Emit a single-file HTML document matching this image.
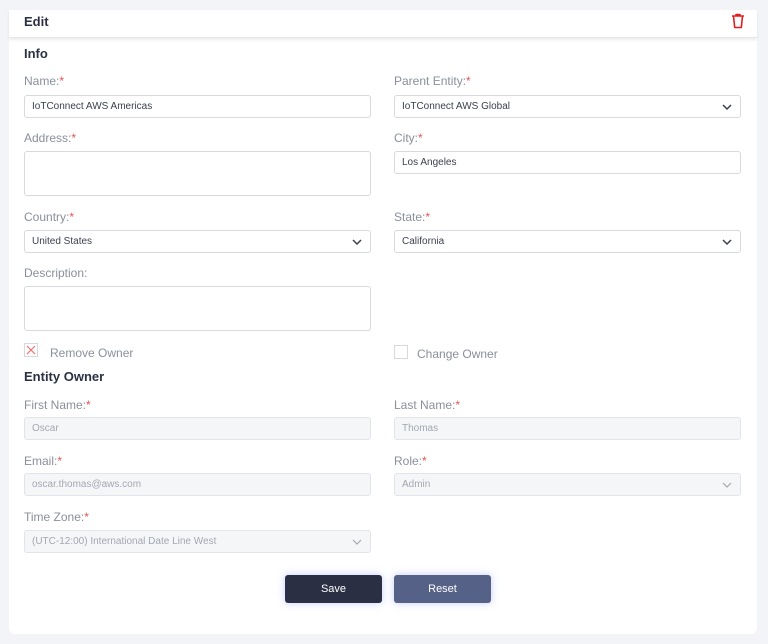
<!DOCTYPE html><html><head><style>
*{box-sizing:border-box;margin:0;padding:0}
body{width:768px;height:644px;background:#f3f4f7;font-family:"Liberation Sans",sans-serif;position:relative;overflow:hidden}
.card{position:absolute;left:9px;top:10px;width:748px;height:624px;background:#fff;border-radius:6px}
.hdr{position:absolute;left:9px;top:10px;width:748px;height:28px;background:#fff;box-shadow:0 2px 3px rgba(0,0,0,.08);border-bottom:1px solid #e6e8ee}
.a{position:absolute}
.t{position:absolute;font-size:12px;color:#8a8f9c}
.t i{color:#e05555;font-style:normal}
.h{position:absolute;font-size:13px;font-weight:bold;color:#2b3142}
.in{position:absolute;border:1px solid #d6d9e0;border-radius:3px;background:#fff;font-size:10px;color:#3a3f4c;padding-left:7px;display:flex;align-items:center}
.dis{background:#f5f6f8;color:#a3a7b1;border-color:#e2e4e9}
.chev{position:absolute;right:8px;top:50%;margin-top:-4px}
.btn{position:absolute;top:575px;width:97px;height:28px;border-radius:3px;color:#fff;font-size:11px;display:flex;align-items:center;justify-content:center;box-shadow:0 0 8px rgba(90,110,255,.35)}
</style></head><body>
<div class="card"></div>
<div class="hdr"></div>
<div class="h" style="left:24px;top:14px">Edit</div>
<svg class="a" style="left:731px;top:13px" width="14" height="16" viewBox="0 0 14 16"><path d="M1 3h12M5 3V1.5h4V3M2.5 3l1.2 11.5h6.6L11.5 3" fill="none" stroke="#e02020" stroke-width="1.6" stroke-linejoin="round"/></svg>
<div class="h" style="left:24px;top:46px">Info</div>

<div class="t" style="left:24px;top:74px">Name:<i>*</i></div>
<div class="in" style="left:24px;top:95px;width:347px;height:23px">IoTConnect AWS Americas</div>
<div class="t" style="left:394px;top:74px">Parent Entity:<i>*</i></div>
<div class="in" style="left:394px;top:95px;width:347px;height:23px">IoTConnect AWS Global<svg class="chev" width="10" height="8"><path d="M1 2l4 4 4-4" fill="none" stroke="#3a3f4c" stroke-width="1.5"/></svg></div>

<div class="t" style="left:24px;top:131px">Address:<i>*</i></div>
<div class="in" style="left:24px;top:151px;width:347px;height:45px"></div>
<div class="t" style="left:394px;top:131px">City:<i>*</i></div>
<div class="in" style="left:394px;top:151px;width:347px;height:23px">Los Angeles</div>

<div class="t" style="left:24px;top:210px">Country:<i>*</i></div>
<div class="in" style="left:24px;top:230px;width:347px;height:23px">United States<svg class="chev" width="10" height="8"><path d="M1 2l4 4 4-4" fill="none" stroke="#3a3f4c" stroke-width="1.5"/></svg></div>
<div class="t" style="left:394px;top:210px">State:<i>*</i></div>
<div class="in" style="left:394px;top:230px;width:347px;height:23px">California<svg class="chev" width="10" height="8"><path d="M1 2l4 4 4-4" fill="none" stroke="#3a3f4c" stroke-width="1.5"/></svg></div>

<div class="t" style="left:24px;top:266px">Description:</div>
<div class="in" style="left:24px;top:286px;width:347px;height:45px"></div>

<svg class="a" style="left:24px;top:343px" width="14" height="14"><rect x=".5" y=".5" width="13" height="13" fill="none" stroke="#d6d9e0"/><path d="M3 3l8 8M11 3l-8 8" stroke="#f07070" stroke-width="1.2"/></svg>
<div class="t" style="left:50px;top:346px">Remove Owner</div>
<svg class="a" style="left:394px;top:345px" width="14" height="14"><rect x=".5" y=".5" width="13" height="13" fill="none" stroke="#d6d9e0"/></svg>
<div class="t" style="left:417px;top:347px">Change Owner</div>

<div class="h" style="left:24px;top:369px">Entity Owner</div>
<div class="t" style="left:24px;top:398px">First Name:<i>*</i></div>
<div class="in dis" style="left:24px;top:417px;width:347px;height:23px">Oscar</div>
<div class="t" style="left:394px;top:398px">Last Name:<i>*</i></div>
<div class="in dis" style="left:394px;top:417px;width:347px;height:23px">Thomas</div>

<div class="t" style="left:24px;top:454px">Email:<i>*</i></div>
<div class="in dis" style="left:24px;top:473px;width:347px;height:23px">oscar.thomas@aws.com</div>
<div class="t" style="left:394px;top:454px">Role:<i>*</i></div>
<div class="in dis" style="left:394px;top:473px;width:347px;height:23px">Admin<svg class="chev" width="10" height="8"><path d="M1 2l4 4 4-4" fill="none" stroke="#a3a7b1" stroke-width="1.2"/></svg></div>

<div class="t" style="left:24px;top:510px">Time Zone:<i>*</i></div>
<div class="in dis" style="left:24px;top:530px;width:347px;height:23px">(UTC-12:00) International Date Line West<svg class="chev" width="10" height="8"><path d="M1 2l4 4 4-4" fill="none" stroke="#a3a7b1" stroke-width="1.2"/></svg></div>

<div class="btn" style="left:285px;background:#2a2f43">Save</div>
<div class="btn" style="left:394px;background:#566187">Reset</div>
</body></html>
